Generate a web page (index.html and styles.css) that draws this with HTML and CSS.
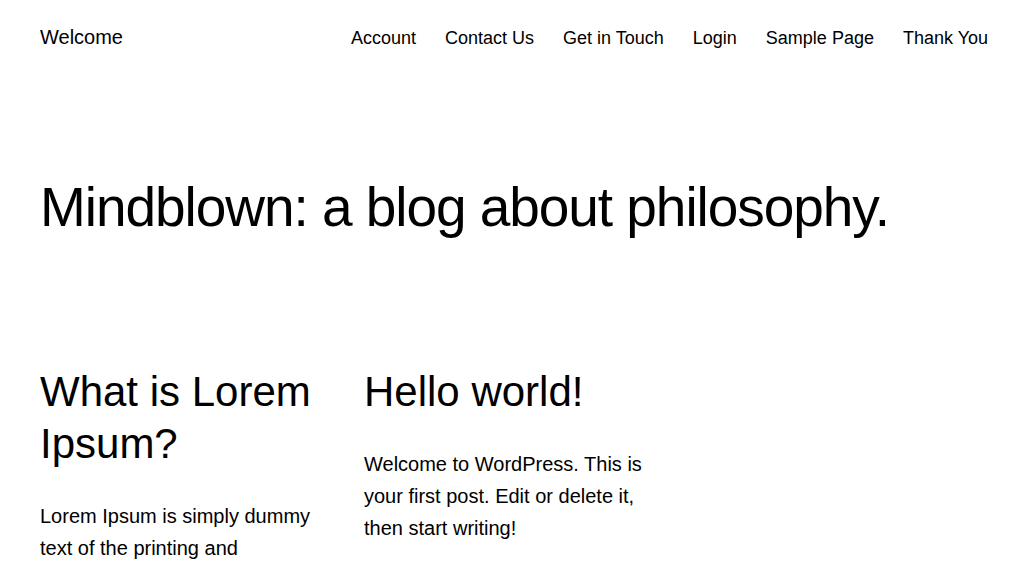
FILE: index.html
```html
<!DOCTYPE html>
<html lang="en">
<head>
<meta charset="utf-8">
<title>Welcome</title>
<link rel="stylesheet" href="styles.css">
</head>
<body>
<header class="site-header">
  <a class="site-title" href="#">Welcome</a>
  <nav class="site-nav">
    <a href="#">Account</a>
    <a href="#">Contact Us</a>
    <a href="#">Get in Touch</a>
    <a href="#">Login</a>
    <a href="#">Sample Page</a>
    <a href="#">Thank You</a>
  </nav>
</header>
<main class="site-main">
  <h1 class="tagline">Mindblown: a blog about philosophy.</h1>
  <section class="posts">
    <article class="post">
      <h2 class="post-title">What is Lorem Ipsum?</h2>
      <p class="post-excerpt">Lorem Ipsum is simply dummy text of the printing and</p>
    </article>
    <article class="post">
      <h2 class="post-title">Hello world!</h2>
      <p class="post-excerpt">Welcome to WordPress. This is your first post. Edit or delete it, then start writing!</p>
    </article>
    <div class="post post-empty"></div>
  </section>
</main>
</body>
</html>
```

FILE: styles.css
```css
* {
  box-sizing: border-box;
}

html, body {
  margin: 0;
  padding: 0;
  background: #ffffff;
  color: #000000;
  font-family: "Liberation Sans", Arial, sans-serif;
}

body {
  height: 567px;
  overflow: hidden;
}

a {
  color: #000000;
  text-decoration: none;
}

.site-header {
  display: flex;
  justify-content: space-between;
  align-items: baseline;
  padding: 21px 36px 0 40px;
}

.site-title {
  font-size: 20px;
  line-height: 32px;
}

.site-nav {
  display: flex;
  align-items: baseline;
  gap: 29px;
  font-size: 18px;
  line-height: 32px;
}

.site-main {
  padding: 0 40px;
}

.tagline {
  margin: 120px 0 0;
  font-size: 55px;
  font-weight: 400;
  line-height: 66px;
  letter-spacing: -1.05px;
}

.posts {
  display: grid;
  grid-template-columns: repeat(3, 1fr);
  gap: 28px;
  margin-top: 126px;
}

.post-title {
  margin: 0;
  font-size: 42px;
  font-weight: 400;
  line-height: 52px;
}

.post-excerpt {
  margin: 30px 0 0;
  font-size: 20px;
  line-height: 32px;
}
```
